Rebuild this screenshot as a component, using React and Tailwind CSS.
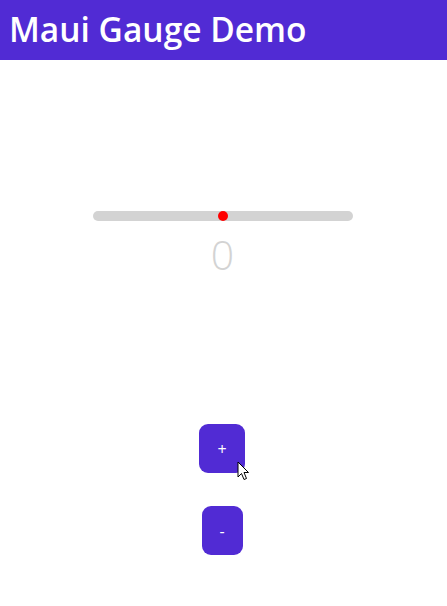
export default function App() {
  return (
    <div className="relative w-[447px] h-[606px] bg-white overflow-hidden" style={{ fontFamily: '"Open Sans", "Noto Sans", sans-serif' }}>
      <div className="h-[60px] bg-[#512bd4] flex items-center pl-[9px]">
        <h1 className="text-white text-[33.5px] font-semibold leading-none">Maui Gauge Demo</h1>
      </div>
      <div className="flex flex-col items-center pt-[151px]">
        <div className="relative w-[260px] h-[10px] rounded-full bg-[#d3d3d3] ml-[-2px]">
          <div className="absolute left-[125px] top-0 w-[10px] h-[10px] rounded-full bg-[#ff0000]" />
        </div>
        <div className="text-[#d3d3d3] text-[41px] font-light leading-none mt-[13px] mr-[2px]">0</div>
      </div>
      <div className="flex flex-col items-center pt-[149px] gap-[33px] pr-[3px]">
        <button className="w-[46px] h-[49px] rounded-[9px] bg-[#512bd4] text-white text-[16px] flex items-center justify-center">+</button>
        <button className="w-[41px] h-[49px] rounded-[9px] bg-[#512bd4] text-white text-[16px] flex items-center justify-center">-</button>
      </div>
      <svg className="absolute left-[237px] top-[461px]" width="13" height="21" viewBox="0 0 13 21">
        <path d="M1 1 L1 16 L4.5 12.5 L7 18.5 L9.5 17.5 L7 11.5 L11.5 11.5 Z" fill="white" stroke="black" strokeWidth="1" strokeLinejoin="round" />
      </svg>
    </div>
  );
}
